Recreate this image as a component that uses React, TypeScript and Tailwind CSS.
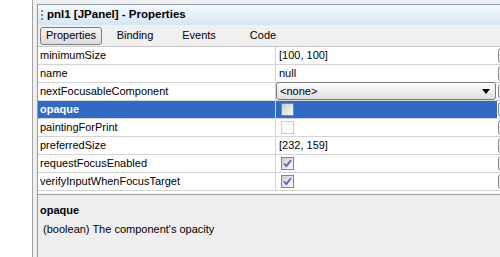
import React from "react"

type Cell =
    | { kind: "text", text: string }
    | { kind: "combo", text: string }
    | { kind: "check", checked: boolean, disabled?: boolean }

type Row = { name: string, value: Cell, selected?: boolean }

const rows: Row[] = [
    { name: "minimumSize", value: { kind: "text", text: "[100, 100]" } },
    { name: "name", value: { kind: "text", text: "null" } },
    { name: "nextFocusableComponent", value: { kind: "combo", text: "<none>" } },
    { name: "opaque", value: { kind: "check", checked: false }, selected: true },
    { name: "paintingForPrint", value: { kind: "check", checked: false, disabled: true } },
    { name: "preferredSize", value: { kind: "text", text: "[232, 159]" } },
    { name: "requestFocusEnabled", value: { kind: "check", checked: true } },
    { name: "verifyInputWhenFocusTarget", value: { kind: "check", checked: true } },
]

function CheckBox({ checked, disabled }: { checked: boolean, disabled?: boolean }) {
    return (
        <div className={`ml-[5px] w-[13px] h-[13px] border flex items-center justify-center ${disabled ? "border-[#cacaca] bg-[#fbfbfb]" : "border-[#858585] bg-gradient-to-br from-[#cfcfcf] to-[#fafafa]"}`}>
            {checked && (
                <svg width="11" height="11" viewBox="0 0 11 11">
                    <path d="M2 5.5 L4.3 8 L9 2.2" fill="none" stroke="#4d6bb0" strokeWidth="1.8" />
                </svg>
            )}
        </div>
    )
}

function Value({ cell }: { cell: Cell }) {
    if (cell.kind == "text") return <span className="pl-[3px]">{cell.text}</span>
    if (cell.kind == "check") return <CheckBox checked={cell.checked} disabled={cell.disabled} />
    return (
        <div className="flex-1 h-[18px] -mt-[1px] mr-[1px] flex items-center justify-between border border-[#7a7a7a] rounded-[3px] bg-gradient-to-b from-[#fdfdfd] to-[#dedede] pl-[3px] pr-[5px]">
            <span>{cell.text}</span>
            <svg width="8" height="5" viewBox="0 0 8 5"><path d="M0 0 H8 L4 5 Z" fill="#000" /></svg>
        </div>
    )
}

function Tab({ label, active }: { label: string, active?: boolean }) {
    return (
        <div className={`w-[62px] h-[18px] flex items-center justify-center rounded-[3px] ${active ? "border border-[#7d7d7d] bg-gradient-to-b from-[#f4f4f4] to-[#dcdcdc]" : ""}`}>
            {label}
        </div>
    )
}

export default function App() {
    return (
        <div className="w-[500px] h-[257px] flex bg-white overflow-hidden font-['Liberation_Sans',Arial,sans-serif] text-[11px] text-black leading-none">
            <div className="w-[32px] shrink-0" />
            <div className="flex-1 flex border-l border-[#a3a3a3] bg-[#f0f0f0] pt-[4px] pl-[4px]">
                <div className="flex-1 flex flex-col border-l border-t border-[#8a9aaa] overflow-hidden">
                    <div className="h-[20px] shrink-0 flex items-center bg-gradient-to-b from-[#f6fafd] to-[#d5e5f3]">
                        <div className="ml-[3px] flex flex-col gap-[2px]">
                            <span className="w-[2px] h-[2px] bg-[#7a8a9a]" />
                            <span className="w-[2px] h-[2px] bg-[#7a8a9a]" />
                            <span className="w-[2px] h-[2px] bg-[#7a8a9a]" />
                        </div>
                        <span className="ml-[4px] font-bold text-[11.5px]">pnl1 [JPanel] - Properties</span>
                    </div>
                    <div className="h-[22px] shrink-0 flex items-center gap-[2px] pl-[2px] border-b border-[#c8c8c8]">
                        <Tab label="Properties" active />
                        <Tab label="Binding" />
                        <Tab label="Events" />
                        <Tab label="Code" />
                    </div>
                    <div className="flex flex-col bg-white shrink-0">
                        {rows.map((row) => (
                            <div key={row.name} className="h-[18px] flex border-b border-[#d4d4d4]">
                                <div className={`w-[237px] shrink-0 flex items-center pl-[2px] ${row.selected ? "bg-[#316ac5] text-white font-bold" : ""}`}>
                                    {row.name}
                                </div>
                                <div className={`w-[222px] shrink-0 flex items-center border-l border-[#d4d4d4] ${row.selected ? "bg-[#316ac5]" : ""}`}>
                                    <Value cell={row.value} />
                                </div>
                                <div className="ml-[1px] w-[16px] shrink-0 my-[1px] border border-[#8a8a8a] rounded-[3px] bg-[#eeeeee]" />
                            </div>
                        ))}
                        <div className="h-[3px]" />
                    </div>
                    <div className="flex-1 border-t border-[#9c9c9c] bg-[#efefef] pt-[10px] pl-[2px] flex flex-col gap-[8px]">
                        <span className="font-bold">opaque</span>
                        <span className="whitespace-pre"> (boolean) The component's opacity</span>
                    </div>
                </div>
            </div>
        </div>
    )
}
